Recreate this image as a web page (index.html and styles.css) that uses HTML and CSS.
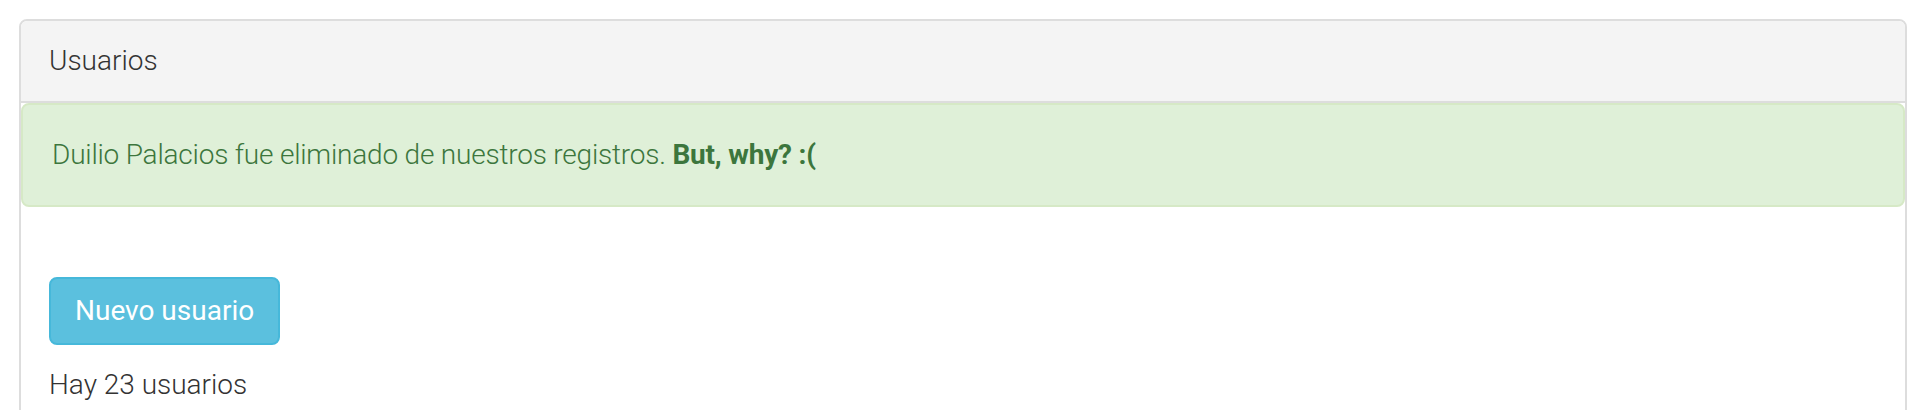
FILE: index.html
```html
<!DOCTYPE html>
<html lang="es">

<head>
    <meta charset="UTF-8">
    <meta name="viewport" content="width=device-width, initial-scale=1.0">
    <title>Usuarios</title>
    <link rel="stylesheet" href="styles.css">
</head>

<body>
    <div class="page">
        <div class="panel">
            <div class="panel-heading">Usuarios</div>

            <div class="alert">
                Duilio Palacios fue eliminado de nuestros registros. <strong>But, why? :(</strong>
            </div>

            <div class="panel-body">
                <p><a href="#" class="btn">Nuevo usuario</a></p>
                <p class="count">Hay 23 usuarios</p>
            </div>
        </div>
    </div>
</body>

</html>
```

FILE: styles.css
```css
body {
    margin: 0;
    background-color: #fff;
    font-family: Roboto, "Liberation Sans", sans-serif;
    font-weight: 300;
    font-size: 28px;
    line-height: 40px;
    color: #333;
}

.page {
    padding: 19px;
}

.panel {
    border: 2px solid #ddd;
    border-radius: 8px;
    overflow: hidden;
}

.panel-heading {
    background-color: #f4f4f4;
    border-bottom: 2px solid #ddd;
    padding: 20px 28px;
}

.alert {
    background-color: #dff0d8;
    border: 2px solid #d6e9c6;
    border-radius: 8px;
    color: #3c763d;
    padding: 30px 29px;
    margin-bottom: 40px;
    letter-spacing: -0.2px;
}

.alert strong {
    font-weight: 700;
}

.panel-body {
    padding: 30px 28px;
}

.panel-body p {
    margin: 0 0 20px;
}

.btn {
    display: inline-block;
    padding: 12px 24px;
    background-color: #5bc0de;
    border: 2px solid #46b8da;
    border-radius: 8px;
    color: #fff;
    text-decoration: none;
    font-weight: 400;
}
```
